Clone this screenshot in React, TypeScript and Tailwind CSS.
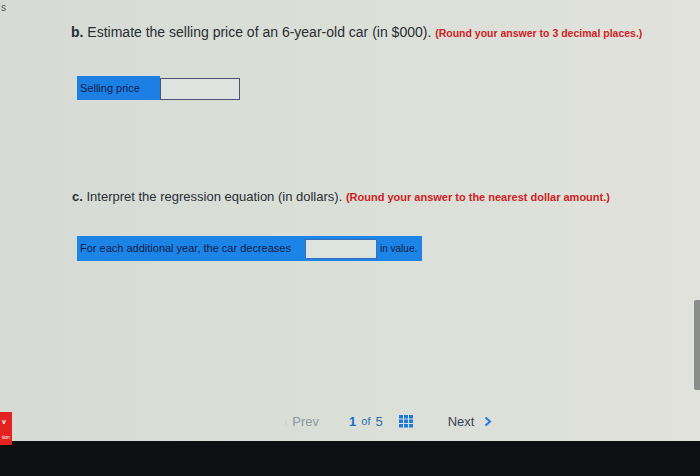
export default function App() {
  return (
    <div
      className="relative w-[700px] h-[476px] overflow-hidden bg-gradient-to-r from-[#d6dbd5] via-[#dadfd8] to-[#e2e2dc] text-[#2a2d33]"
      style={{ fontFamily: '"Liberation Sans", Arial, sans-serif' }}
    >
      <div className="flex flex-col h-[441px]">
        <div className="text-[10px] text-[#555] pl-[1px] pt-[3px] leading-none">s</div>

        <div className="pl-[71px] pt-[12px] text-[14px] leading-none">
          <span className="font-bold">b.</span> Estimate the selling price of an 6-year-old car (in $000).{' '}
          <span className="text-[10.5px] font-bold text-[#d0211f]">(Round your answer to 3 decimal places.)</span>
        </div>

        <div className="pl-[77px] pt-[37px] flex items-end">
          <div className="w-[83px] h-[24px] bg-[#1b7fe3] text-[11px] text-[#12204a] flex items-center pl-[3px]">
            Selling price
          </div>
          <div className="w-[80px] h-[22px] bg-[#dfe2de] border border-[#4a5270]" />
        </div>

        <div className="pl-[72px] pt-[90px] text-[13px] leading-none">
          <span className="font-bold">c.</span> Interpret the regression equation (in dollars).{' '}
          <span className="text-[11px] font-bold text-[#d0211f]">(Round your answer to the nearest dollar amount.)</span>
        </div>

        <div className="pl-[77px] pt-[33px] flex">
          <div className="h-[25px] bg-[#1b84e6] flex items-center pl-[3px] pr-[5px]">
            <span className="text-[11px] text-[#12204a] w-[225px]">For each additional year, the car decreases</span>
            <div className="w-[72px] h-[20px] bg-[#dde3de] border border-[#3a6fb8]" />
            <span className="text-[10px] text-[#12204a] pl-[3px]">in value.</span>
          </div>
        </div>

        <div className="flex-1" />

        <div className="flex items-center pl-[284px] pb-[10px] text-[13px]">
          <span className="text-[#c9d3d6] mr-[4px]">&lsaquo;</span>
          <span className="text-[#8e98a2]">Prev</span>
          <span className="ml-[30px] text-[#1c6fc4] font-bold">1</span>
          <span className="ml-[5px] text-[#2b6cb0] text-[11px]">of</span>
          <span className="ml-[5px] text-[#2b6cb0]">5</span>
          <svg className="ml-[16px]" width="14" height="13" viewBox="0 0 14 13">
            {[0, 1, 2].map((r) =>
              [0, 1, 2].map((c) => (
                <rect key={`${r}${c}`} x={c * 5} y={r * 4.5} width="4" height="3.5" fill="#1f7ae0" />
              ))
            )}
          </svg>
          <span className="ml-[35px] text-[#3a4350]">Next</span>
          <svg className="ml-[10px]" width="8" height="11" viewBox="0 0 8 11">
            <path d="M1.5 1.5 L6 5.5 L1.5 9.5" fill="none" stroke="#1f7ae0" strokeWidth="2" />
          </svg>
        </div>
      </div>

      <div className="h-[35px] bg-[#0e0f10]" />

      <div className="absolute left-0 top-[412px] w-[12px] h-[33px] bg-[#e3231f] flex flex-col items-start pl-[2px] pt-[6px] leading-none">
        <span className="text-[7px] font-bold text-white">v</span>
        <span className="text-[5px] text-white mt-[10px]">tion</span>
      </div>
      <div className="absolute right-0 top-[300px] w-[6px] h-[90px] bg-[#8a8d8c] rounded-l-[2px]" />
    </div>
  );
}
